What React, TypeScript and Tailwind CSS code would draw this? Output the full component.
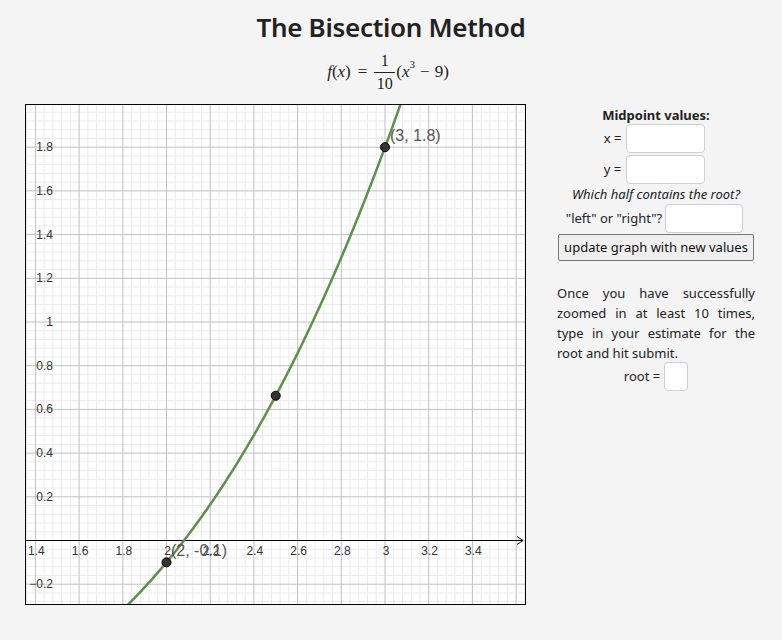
import React from "react";

const X0 = 359; // local x of value 3
const U = 218.5;
const Y0 = 435.5; // local y of value 0
const W = 499;
const H = 499;
const X = (x: number) => X0 + (x - 3) * U;
const Y = (y: number) => Y0 - y * U;
const f = (x: number) => (x * x * x - 9) / 10;

function Graph() {
  const minorV: number[] = [];
  const majorV: number[] = [];
  for (let i = -10; i <= 120; i++) {
    const v = i * 0.04;
    const px = X(v);
    if (px < 0 || px > W) continue;
    if (i % 5 === 0) majorV.push(px);
    else minorV.push(px);
  }
  const minorH: number[] = [];
  const majorH: number[] = [];
  for (let i = -20; i <= 60; i++) {
    const v = i * 0.04;
    const py = Y(v);
    if (py < 0 || py > H) continue;
    if (i % 5 === 0) majorH.push(py);
    else minorH.push(py);
  }
  const pts: string[] = [];
  for (let x = 1.8; x <= 3.2; x += 0.005) {
    pts.push(`${X(x).toFixed(2)},${Y(f(x)).toFixed(2)}`);
  }
  const xLabels = ["1.4", "1.6", "1.8", "2", "2.2", "2.4", "2.6", "2.8", "3", "3.2", "3.4"];
  const yLabels = ["-0.2", "0.2", "0.4", "0.6", "0.8", "1", "1.2", "1.4", "1.6", "1.8"];
  return (
    <div className="w-[501px] h-[501px] border border-black bg-white shrink-0">
      <svg width={W} height={H} viewBox={`0 0 ${W} ${H}`} className="block">
        <defs>
          <clipPath id="c">
            <rect x={0} y={0} width={W} height={H} />
          </clipPath>
        </defs>
        {minorV.map((p, i) => (
          <line key={"mv" + i} x1={p} x2={p} y1={0} y2={H} stroke="#ebebeb" strokeWidth={1} />
        ))}
        {minorH.map((p, i) => (
          <line key={"mh" + i} y1={p} y2={p} x1={0} x2={W} stroke="#ebebeb" strokeWidth={1} />
        ))}
        {majorV.map((p, i) => (
          <line key={"Mv" + i} x1={p} x2={p} y1={0} y2={H} stroke="#c0c0c0" strokeWidth={1} />
        ))}
        {majorH.map((p, i) => (
          <line key={"Mh" + i} y1={p} y2={p} x1={0} x2={W} stroke="#c0c0c0" strokeWidth={1} />
        ))}
        <line x1={0} x2={497} y1={Y0} y2={Y0} stroke="#000" strokeWidth={1} />
        <path d={`M491,${Y0 - 4} L497,${Y0} L491,${Y0 + 4}`} fill="none" stroke="#000" strokeWidth={1} />
        {xLabels.map((l) => (
          <text
            key={"x" + l}
            x={X(parseFloat(l)) + 1}
            y={Y0 + 14}
            textAnchor="middle"
            fontFamily="'Liberation Sans', Arial, sans-serif"
            fontSize={12}
            fill="#333"
          >
            {l}
          </text>
        ))}
        {yLabels.map((l) => (
          <text
            key={"y" + l}
            x={27}
            y={Y(parseFloat(l)) + 4}
            textAnchor="end"
            fontFamily="'Liberation Sans', Arial, sans-serif"
            fontSize={12}
            fill="#333"
          >
            {l.replace("-", "\u2212")}
          </text>
        ))}
        <polyline
          points={pts.join(" ")}
          fill="none"
          stroke="#5f8f4f"
          strokeWidth={2.5}
          clipPath="url(#c)"
        />
        <circle cx={X(3)} cy={Y(1.8)} r={4.5} fill="#333" stroke="#000" strokeWidth={1} />
        <circle cx={X(2.5)} cy={Y(f(2.5))} r={4.5} fill="#333" stroke="#000" strokeWidth={1} />
        <circle cx={X(2)} cy={Y(-0.1)} r={4.5} fill="#333" stroke="#000" strokeWidth={1} />
        <text x={364} y={36} fontFamily="'Liberation Sans', Arial, sans-serif" fontSize={16} fill="#555">
          (3, 1.8)
        </text>
        <text x={145} y={451} fontFamily="'Liberation Sans', Arial, sans-serif" fontSize={16} fill="#555">
          (2, -0.1)
        </text>
      </svg>
    </div>
  );
}

function Formula() {
  return (
    <div className="flex justify-center items-center h-[44px] pt-[7px] font-['Liberation_Serif',serif] text-[17px] text-[#222] ml-[-6px]">
      <span className="italic">f</span>
      <span>(</span>
      <span className="italic">x</span>
      <span>)</span>
      <span className="mx-[7px]">=</span>
      <span className="inline-flex flex-col items-center leading-none mt-[2px]">
        <span className="text-[16px] pb-[3px]">1</span>
        <span className="h-px w-[21px] bg-[#222]" />
        <span className="text-[16px] pt-[3px]">10</span>
      </span>
      <span className="ml-[1px]">(</span>
      <span className="italic">x</span>
      <span className="text-[11px] relative top-[-7px]">3</span>
      <span className="mx-[5px]">−</span>
      <span>9)</span>
    </div>
  );
}

function Input({ w, h }: { w: number; h: number }) {
  return (
    <div
      className="bg-white border border-[#cfcfcf] rounded-[4px]"
      style={{ width: w, height: h }}
    />
  );
}

function Panel() {
  return (
    <div className="w-[198px] ml-[31px] mt-[2px] flex flex-col items-center text-[13px] text-[#222] font-['Noto_Sans',sans-serif]">
      <div className="font-bold leading-[18px]">Midpoint values:</div>
      <div className="flex items-center gap-[5px] ml-[-3px]">
        <span>x =</span>
        <Input w={79} h={29} />
      </div>
      <div className="flex items-center gap-[5px] mt-[2px] ml-[-3px]">
        <span>y =</span>
        <Input w={79} h={29} />
      </div>
      <div className="italic leading-[20px]">Which half contains the root?</div>
      <div className="flex items-center gap-[3px] ml-[-3px]">
        <span>"left" or "right"?</span>
        <Input w={78} h={29} />
      </div>
      <button className="w-[196px] h-[27px] mt-[1px] bg-[#efefef] border border-[#767676] rounded-[2px] text-[13px] text-[#111] leading-none">
        update graph with new values
      </button>
      <p className="mt-[22px] w-[198px] text-justify leading-[20px]">
        Once you have successfully zoomed in at least 10 times, type in your estimate for the root and hit submit.
      </p>
      <div className="flex items-center gap-[4px] mt-[-1px] ml-[0px]">
        <span>root =</span>
        <Input w={24} h={29} />
      </div>
    </div>
  );
}

export default function App() {
  return (
    <div className="w-[782px] h-[640px] bg-[#f4f4f4] overflow-hidden">
      <h1 className="text-center text-[26px] tracking-[-0.3px] font-semibold text-[#222] font-['Noto_Sans',sans-serif] pt-[9px] leading-[37px]">
        The Bisection Method
      </h1>
      <Formula />
      <div className="flex mt-[14px] ml-[25px]">
        <Graph />
        <Panel />
      </div>
    </div>
  );
}
